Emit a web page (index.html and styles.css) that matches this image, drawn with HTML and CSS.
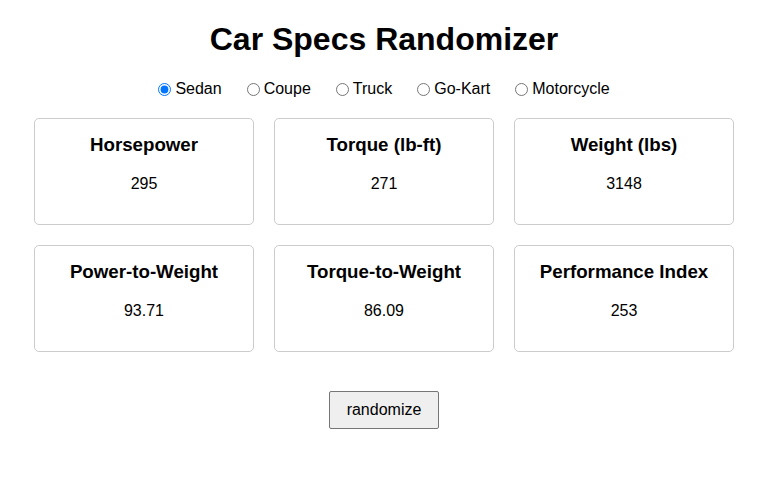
FILE: index.html
```html
<!DOCTYPE html>
<html>
<head>
<meta charset="utf-8">
<link rel="stylesheet" href="styles.css">
</head>
<body>
<h1 class="title">Car Specs Randomizer</h1>
<div class="types">
  <label class="type"><input type="radio" name="type" checked>Sedan</label>
  <label class="type"><input type="radio" name="type">Coupe</label>
  <label class="type"><input type="radio" name="type">Truck</label>
  <label class="type"><input type="radio" name="type">Go-Kart</label>
  <label class="type"><input type="radio" name="type">Motorcycle</label>
</div>
<div class="grid">
  <div class="card"><h3 class="card-title">Horsepower</h3><p class="card-value">295</p></div>
  <div class="card"><h3 class="card-title">Torque (lb-ft)</h3><p class="card-value">271</p></div>
  <div class="card"><h3 class="card-title">Weight (lbs)</h3><p class="card-value">3148</p></div>
  <div class="card"><h3 class="card-title">Power-to-Weight</h3><p class="card-value">93.71</p></div>
  <div class="card"><h3 class="card-title">Torque-to-Weight</h3><p class="card-value">86.09</p></div>
  <div class="card"><h3 class="card-title">Performance Index</h3><p class="card-value">253</p></div>
</div>
<div class="actions">
  <button class="btn">randomize</button>
</div>
</body>
</html>
```
FILE: styles.css
```css
body {
  margin: 0;
  padding: 0 8px 8px;
  font-family: "Liberation Sans", Arial, sans-serif;
  color: #000;
  background: #fff;
}
.title {
  text-align: center;
  font-size: 32px;
  font-weight: bold;
  margin: 0;
  padding: 21px 0 0;
  margin-bottom: 22px;
}
.types {
  display: flex;
  justify-content: center;
  gap: 20px;
  padding-right: 5px;
  font-size: 16px;
  line-height: 18px;
}
.type {
  display: inline-flex;
  align-items: center;
}
.type input {
  margin: 0 4px 0 5px;
  width: 13px;
  height: 13px;
}
.grid {
  width: 700px;
  margin: 20px auto 0;
  display: grid;
  grid-template-columns: repeat(3, 1fr);
  gap: 20px;
}
.card {
  border: 1px solid #ccc;
  border-radius: 5px;
  padding: 15px;
  text-align: center;
}
.card-title {
  margin: 0 0 19px;
  font-size: 18.72px;
  font-weight: bold;
}
.card-value {
  margin: 0 0 16px;
  font-size: 16px;
}
.actions {
  display: flex;
  justify-content: center;
  margin-top: 39px;
}
.btn {
  font-family: "Liberation Sans", Arial, sans-serif;
  font-size: 16px;
  padding: 9px 17px;
  background: #efefef;
  border: 1px solid #767676;
  border-radius: 2px;
  color: #000;
}
```
